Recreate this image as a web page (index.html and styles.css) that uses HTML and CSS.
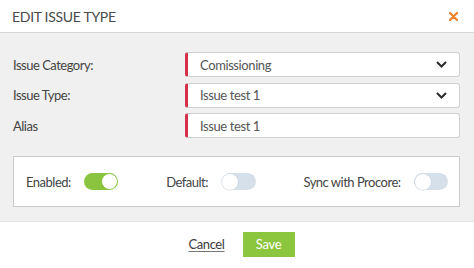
FILE: index.html
```html
<!DOCTYPE html>
<html>
<head>
<meta charset="utf-8">
<link rel="stylesheet" href="styles.css">
</head>
<body>
<div class="dialog">
  <div class="header">
    <div class="title">EDIT ISSUE TYPE</div>
    <svg class="close" width="9" height="9" viewBox="0 0 9 9"><path d="M1 1L8 8M8 1L1 8" stroke="#f08128" stroke-width="2.2" stroke-linecap="round"/></svg>
  </div>
  <div class="body">
    <div class="form">
      <div class="label">Issue Category:</div>
      <div class="field"><span>Comissioning</span><svg class="chev" width="11" height="7" viewBox="0 0 11 7"><path d="M1 1L5.5 5.5L10 1" fill="none" stroke="#2b2b2b" stroke-width="2"/></svg></div>
      <div class="label">Issue Type:</div>
      <div class="field"><span>Issue test 1</span><svg class="chev" width="11" height="7" viewBox="0 0 11 7"><path d="M1 1L5.5 5.5L10 1" fill="none" stroke="#2b2b2b" stroke-width="2"/></svg></div>
      <div class="label">Alias</div>
      <div class="field"><span>Issue test 1</span></div>
    </div>
    <div class="toggles">
      <div class="tgroup"><span>Enabled:</span><span class="switch on"><span class="knob"></span></span></div>
      <div class="tgroup"><span>Default:</span><span class="switch"><span class="knob"></span></span></div>
      <div class="tgroup"><span>Sync with Procore:</span><span class="switch"><span class="knob"></span></span></div>
    </div>
  </div>
  <div class="footer">
    <a class="cancel">Cancel</a>
    <button class="save">Save</button>
  </div>
</div>
</body>
</html>
```
FILE: styles.css
```css
html, body {
  margin: 0;
  padding: 0;
  background: #fff;
}
.dialog {
  width: 474px;
  height: 268px;
  font-family: Lato, "Open Sans", sans-serif;
  color: #4a4a4a;
  display: flex;
  flex-direction: column;
}
.header {
  height: 32px;
  border-bottom: 1px solid #d6d6d6;
  display: flex;
  align-items: center;
  justify-content: space-between;
  padding: 0 16px 0 12px;
}
.title {
  font-size: 14px;
  color: #4a4a4a;
  letter-spacing: -0.3px;
}
.close {
  display: block;
}
.body {
  background: #f0f0f0;
  padding: 19px 14px 14px 13px;
  border-bottom: 1px solid #e2e2e2;
}
.form {
  display: grid;
  grid-template-columns: 172px 275px;
  grid-auto-rows: 25px;
  row-gap: 5.5px;
}
.label {
  font-size: 13px;
  letter-spacing: -0.5px;
  color: #444;
  display: flex;
  align-items: center;
}
.field {
  background: #fff;
  border: 1px solid #d0d0d0;
  border-left: 3px solid #d42f4b;
  border-radius: 3px;
  display: flex;
  align-items: center;
  justify-content: space-between;
  padding: 0 12px 0 12px;
  font-size: 13px;
  letter-spacing: -0.4px;
  color: #555;
}
.chev {
  display: block;
}
.toggles {
  margin-top: 18px;
  height: 49px;
  background: #fff;
  border: 1px solid #cacaca;
  display: flex;
  align-items: center;
  justify-content: space-between;
  padding: 0 11px 0 12px;
}
.tgroup {
  display: flex;
  align-items: center;
  gap: 13.5px;
  font-size: 13px;
  letter-spacing: -0.5px;
  color: #444;
}
.switch {
  width: 34px;
  height: 17px;
  border-radius: 9px;
  background: #d6e0ea;
  position: relative;
  display: inline-block;
}
.switch .knob {
  position: absolute;
  top: 0.5px;
  left: 0.5px;
  width: 16px;
  height: 16px;
  border-radius: 50%;
  background: #fff;
  box-shadow: 0 0 0 0.6px #c6d0da;
}
.switch.on {
  background: #8bc540;
}
.switch.on .knob {
  left: 17.5px;
  top: 1px;
  width: 15px;
  height: 15px;
  box-shadow: none;
}
.footer {
  flex: 1;
  display: flex;
  align-items: center;
  justify-content: center;
  gap: 18px;
  padding-left: 9px;
  padding-bottom: 2px;
}
.cancel {
  font-size: 13px;
  letter-spacing: -0.4px;
  color: #3a3a3a;
  text-decoration: underline;
  text-decoration-color: #777;
  text-underline-offset: 2px;
}
.save {
  width: 52px;
  height: 25px;
  border: none;
  border-radius: 0;
  background: #8cc63e;
  color: #fff;
  font-family: Lato, sans-serif;
  font-size: 13px;
  letter-spacing: -0.3px;
  padding: 0;
}
```
